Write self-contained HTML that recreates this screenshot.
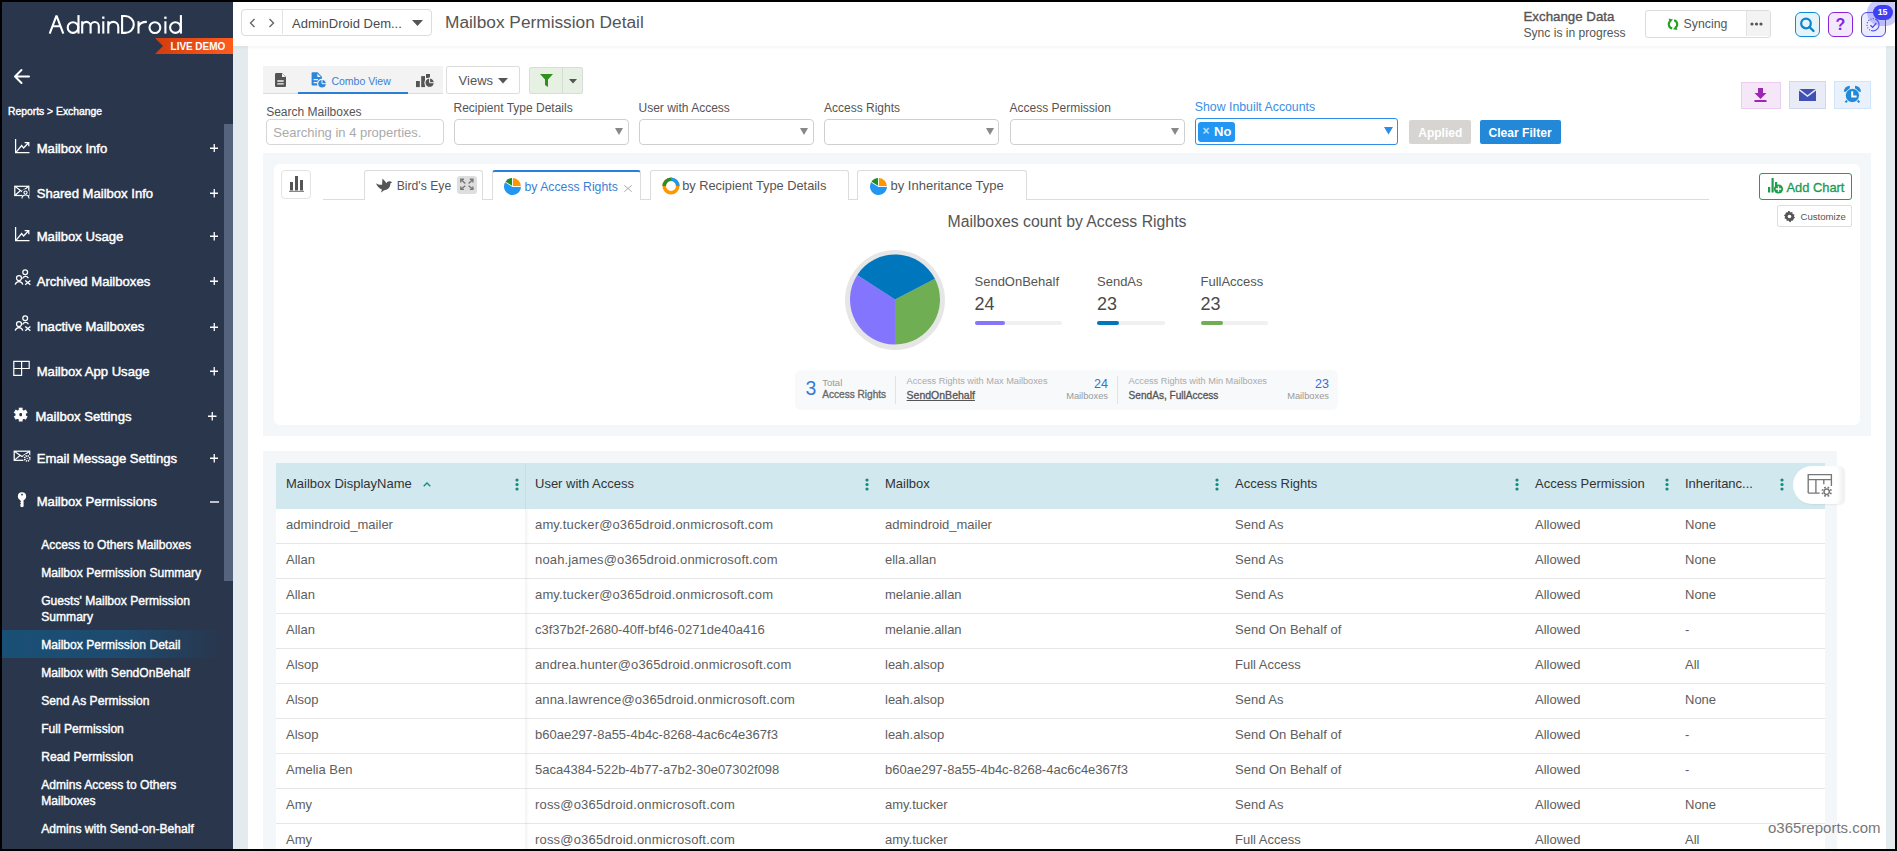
<!DOCTYPE html>
<html><head><meta charset="utf-8"><style>
html,body{margin:0;padding:0;width:1897px;height:851px;overflow:hidden;background:#000}
body{position:relative;font-family:"Liberation Sans",sans-serif}
.t{position:absolute;white-space:nowrap;font-family:"Liberation Sans",sans-serif}
svg{display:block}
</style></head><body>
<div style="position:absolute;left:233px;top:2px;width:1662px;height:847px;background:#e4ebef"></div>
<div style="position:absolute;left:248px;top:46px;width:1638px;height:803px;background:#fff"></div>
<div style="position:absolute;left:233px;top:2px;width:1662px;height:44px;background:#fff;box-shadow:0 1px 4px rgba(0,0,0,0.06)"></div>
<div style="position:absolute;left:241px;top:9px;width:191px;height:26.6px;border:1px solid #dcdcdc;border-radius:4px;box-sizing:border-box;background:#fff"></div>
<div style="position:absolute;left:282px;top:10px;width:1px;height:24px;background:#e3e3e3"></div>
<svg style="position:absolute;left:248.7px;top:18px;" width="7" height="10" viewBox="0 0 7 10"><path d="M5.5 1L1.5 5L5.5 9" stroke="#666" stroke-width="1.4" fill="none"/></svg>
<svg style="position:absolute;left:268px;top:18px;" width="7" height="10" viewBox="0 0 7 10"><path d="M1.5 1L5.5 5L1.5 9" stroke="#666" stroke-width="1.4" fill="none"/></svg>
<div class="t " style="left:292px;top:16.50px;font-size:13px;line-height:13px;color:#4a4a4a;font-weight:normal;letter-spacing:0px">AdminDroid Dem...</div>
<svg style="position:absolute;left:412px;top:20px;" width="11" height="6" viewBox="0 0 11 6"><path d="M0 0H11L5.5 6Z" fill="#555"/></svg>
<div class="t " style="left:445px;top:13.96px;font-size:17.3px;line-height:17.3px;color:#555;font-weight:normal;">Mailbox Permission Detail</div>
<div class="t " style="left:1523.5px;top:9.74px;font-size:13.3px;line-height:13.3px;color:#555;font-weight:normal;-webkit-text-stroke:0.35px #555">Exchange Data</div>
<div class="t " style="left:1523.5px;top:27.36px;font-size:12.1px;line-height:12.1px;color:#555;font-weight:normal;">Sync is in progress</div>
<div style="position:absolute;left:1645px;top:10px;width:126px;height:27.5px;border:1px solid #dcdcdc;border-radius:3px;box-sizing:border-box;background:#fff"></div>
<div style="position:absolute;left:1746px;top:11px;width:24px;height:25px;background:#f3f3f3;border-left:1px solid #e3e3e3;box-sizing:border-box"></div>
<svg style="position:absolute;left:1664px;top:17px;" width="18" height="16" viewBox="0 0 18 16"><path d="M6.90 3.66A4.2 4.2 0 0 0 8.27 11.44M10.09 3.24A4.2 4.2 0 0 1 11.10 10.94" stroke="#22a222" stroke-width="2.1" fill="none"/><path d="M4.6 1.6L9 2.4L6 5.6Z" fill="#22a222"/><path d="M13.4 13L9 12.2L12 9Z" fill="#22a222"/></svg>
<div class="t " style="left:1683.6px;top:18.09px;font-size:12.3px;line-height:12.3px;color:#555;font-weight:normal;">Syncing</div>
<svg style="position:absolute;left:1750px;top:22px;" width="13" height="4" viewBox="0 0 13 4"><circle cx="2" cy="2" r="1.6" fill="#555"/><circle cx="6.5" cy="2" r="1.6" fill="#555"/><circle cx="11" cy="2" r="1.6" fill="#555"/></svg>
<div style="position:absolute;left:1795px;top:12px;width:25px;height:25px;border:1.3px solid #0a8fd6;background:#e6f3fb;border-radius:6px;box-sizing:border-box"></div>
<svg style="position:absolute;left:1799px;top:17px;" width="17" height="16" viewBox="0 0 17 16"><circle cx="7" cy="6.5" r="4.8" stroke="#0a84cc" stroke-width="2.2" fill="none"/><path d="M10.5 10L14.5 14" stroke="#0a84cc" stroke-width="2.4" stroke-linecap="round"/></svg>
<div style="position:absolute;left:1828px;top:12px;width:25px;height:25px;border:1.3px solid #8a22dd;background:#f2e9fc;border-radius:6px;box-sizing:border-box"></div>
<div class="t" style="left:1828px;top:14.5px;width:25px;text-align:center;font-size:16px;line-height:20px;color:#8a22dd;font-weight:bold">?</div>
<div style="position:absolute;left:1861px;top:12px;width:25px;height:25px;border:1.3px solid #4747f0;background:#ebebfd;border-radius:6px;box-sizing:border-box"></div>
<svg style="position:absolute;left:1866px;top:18px;" width="15" height="15" viewBox="0 0 15 15"><path d="M9.19 1.07A6.1 6.1 0 0 1 5.01 12.53" stroke="#4747f0" stroke-width="1.1" fill="none"/><circle cx="3.60" cy="11.80" r="0.65" fill="#4747f0"/><circle cx="1.82" cy="9.85" r="0.65" fill="#4747f0"/><circle cx="1.02" cy="7.33" r="0.65" fill="#4747f0"/><circle cx="1.37" cy="4.71" r="0.65" fill="#4747f0"/><circle cx="2.79" cy="2.49" r="0.65" fill="#4747f0"/><circle cx="5.01" cy="1.07" r="0.65" fill="#4747f0"/><circle cx="7.31" cy="0.70" r="0.65" fill="#4747f0"/><path d="M4.4 7.3L6.6 9.3L10.4 5" stroke="#4747f0" stroke-width="1.2" fill="none"/></svg>
<div style="position:absolute;left:1873px;top:5px;width:20px;height:15px;border-radius:8px;background:#3f3ff2;box-shadow:0 0 0 6px rgba(90,90,240,0.32)"></div>
<div class="t " style="left:1877.8px;top:8.25px;font-size:8.8px;line-height:8.8px;color:#fff;font-weight:bold;letter-spacing:-0.2px">15</div>
<div style="position:absolute;left:2px;top:2px;width:231px;height:847px;background:#29364c"></div>
<svg style="position:absolute;left:45px;top:10px;" width="145" height="28" viewBox="0 0 145 28"><g stroke="#fff" stroke-width="2.1" fill="none"><path d="M4.7 23.6L11.5 5.6L18.3 23.6M7.5 16.2H15.5" stroke-linejoin="bevel"/><circle cx="28" cy="17.6" r="5.3"/><path d="M33.5 5.1V23.6"/><path d="M37.2 11.3V23.6M37.2 16.1A4.2 4.2 0 0 1 45.6 16.1V23.6M45.6 16.1A4.1 4.1 0 0 1 53.8 16.1V23.6"/><path d="M58.3 11.3V23.6"/><path d="M63.3 11.3V23.6M63.3 16.9A5 5 0 0 1 73.3 16.9V23.6"/><path d="M77.1 5V23.6M76.1 6H80A8.8 8.45 0 0 1 80 22.9H76.1"/><path d="M93.5 11.3V23.6M93.5 16.8C94.3 13.5 97 11.9 101.8 11.9"/><circle cx="109.9" cy="17.6" r="5.4"/><path d="M120.4 11.3V23.6"/><circle cx="130.4" cy="17.6" r="5.3"/><path d="M135.9 5.1V23.6"/></g><rect x="57.15" y="6.5" width="2.3" height="2.3" fill="#fff"/><rect x="119.25" y="6.6" width="2.3" height="2.3" fill="#fff"/></svg>
<svg style="position:absolute;left:155px;top:38px;" width="78" height="16" viewBox="0 0 78 16"><defs><linearGradient id="lg" x1="0" x2="1"><stop offset="0" stop-color="#d23c0c"/><stop offset="1" stop-color="#ff5b1f"/></linearGradient></defs><polygon points="0,0 78,0 78,16 0,16 8,8" fill="url(#lg)"/></svg>
<div class="t " style="left:170.6px;top:41.53px;font-size:10px;line-height:10px;color:#fff;font-weight:bold;letter-spacing:-0.05px">LIVE DEMO</div>
<svg style="position:absolute;left:13px;top:68px;" width="17" height="17" viewBox="0 0 17 17"><path d="M16 8.5H2M8.5 2L2 8.5L8.5 15" stroke="#fff" stroke-width="2" fill="none" stroke-linecap="round" stroke-linejoin="round"/></svg>
<div class="t " style="left:8px;top:107.04px;font-size:10.35px;line-height:10.35px;color:#fff;font-weight:normal;-webkit-text-stroke:0.4px #fff">Reports &gt; Exchange</div>
<div style="position:absolute;left:224px;top:124px;width:9px;height:457px;background:#55637d"></div>
<div class="t " style="left:36.7px;top:141.71px;font-size:13.1px;line-height:13.1px;color:#fff;font-weight:normal;-webkit-text-stroke:0.45px #fff">Mailbox Info</div>
<svg style="position:absolute;left:14px;top:138.8px;" width="17" height="16" viewBox="0 0 17 16"><path d="M1.6 0V13.7H15.5" stroke="#fff" stroke-width="1.25" fill="none"/><path d="M2.2 13.2L7.6 6.6L9.6 9L14.3 4M10.6 3.5H14.8V7.2" stroke="#fff" stroke-width="1.25" fill="none"/></svg>
<svg style="position:absolute;left:209.6px;top:143.8px;" width="8.5" height="8.5" viewBox="0 0 8.5 8.5"><path d="M4.25 0V8.5M0 4.25H8.5" stroke="#fff" stroke-width="1.3"/></svg>
<div class="t " style="left:36.7px;top:186.91px;font-size:13.1px;line-height:13.1px;color:#fff;font-weight:normal;-webkit-text-stroke:0.45px #fff">Shared Mailbox Info</div>
<svg style="position:absolute;left:14px;top:182.5px;" width="17" height="18" viewBox="0 0 17 18"><rect x="0.8" y="3.3" width="14" height="9.2" stroke="#fff" stroke-width="1.25" fill="none"/><path d="M0.8 3.3L7.8 8.5L14.8 3.3M0.8 12.5L6 8M14.8 9L10 7" stroke="#fff" stroke-width="1.1" fill="none"/><circle cx="11.5" cy="10" r="3.8" fill="#29364c"/><circle cx="11.5" cy="9.6" r="1.6" stroke="#fff" stroke-width="1.1" fill="none"/><path d="M8 15.5C8 13 9.5 12 11.5 12S15 13 15 15.5" stroke="#fff" stroke-width="1.1" fill="none"/></svg>
<svg style="position:absolute;left:209.6px;top:189px;" width="8.5" height="8.5" viewBox="0 0 8.5 8.5"><path d="M4.25 0V8.5M0 4.25H8.5" stroke="#fff" stroke-width="1.3"/></svg>
<div class="t " style="left:36.7px;top:229.91px;font-size:13.1px;line-height:13.1px;color:#fff;font-weight:normal;-webkit-text-stroke:0.45px #fff">Mailbox Usage</div>
<svg style="position:absolute;left:14px;top:227px;" width="17" height="16" viewBox="0 0 17 16"><path d="M1.6 0V13.7H15.5" stroke="#fff" stroke-width="1.25" fill="none"/><path d="M2.2 13.2L7.6 6.6L9.6 9L14.3 4M10.6 3.5H14.8V7.2" stroke="#fff" stroke-width="1.25" fill="none"/></svg>
<svg style="position:absolute;left:209.6px;top:232px;" width="8.5" height="8.5" viewBox="0 0 8.5 8.5"><path d="M4.25 0V8.5M0 4.25H8.5" stroke="#fff" stroke-width="1.3"/></svg>
<div class="t " style="left:36.7px;top:274.71px;font-size:13.1px;line-height:13.1px;color:#fff;font-weight:normal;-webkit-text-stroke:0.45px #fff">Archived Mailboxes</div>
<svg style="position:absolute;left:14px;top:269.0px;" width="18" height="18" viewBox="0 0 18 18"><circle cx="11.2" cy="3.2" r="2.4" stroke="#fff" stroke-width="1.25" fill="none"/><path d="M8.5 9.5A3.2 3.2 0 0 1 14.4 9.2" stroke="#fff" stroke-width="1.25" fill="none"/><circle cx="5" cy="9" r="2.5" stroke="#fff" stroke-width="1.25" fill="none"/><path d="M1.2 15.6A3.9 3.9 0 0 1 8.8 15.6" stroke="#fff" stroke-width="1.25" fill="none"/><path d="M11.2 11.4L16.4 15.8M16.4 11.4L11.2 15.8" stroke="#fff" stroke-width="1.3"/></svg>
<svg style="position:absolute;left:209.6px;top:276.8px;" width="8.5" height="8.5" viewBox="0 0 8.5 8.5"><path d="M4.25 0V8.5M0 4.25H8.5" stroke="#fff" stroke-width="1.3"/></svg>
<div class="t " style="left:36.7px;top:320.41px;font-size:13.1px;line-height:13.1px;color:#fff;font-weight:normal;-webkit-text-stroke:0.45px #fff">Inactive Mailboxes</div>
<svg style="position:absolute;left:14px;top:314.7px;" width="18" height="18" viewBox="0 0 18 18"><circle cx="11.2" cy="3.2" r="2.4" stroke="#fff" stroke-width="1.25" fill="none"/><path d="M8.5 9.5A3.2 3.2 0 0 1 14.4 9.2" stroke="#fff" stroke-width="1.25" fill="none"/><circle cx="5" cy="9" r="2.5" stroke="#fff" stroke-width="1.25" fill="none"/><path d="M1.2 15.6A3.9 3.9 0 0 1 8.8 15.6" stroke="#fff" stroke-width="1.25" fill="none"/><path d="M11.2 11.4L16.4 15.8M16.4 11.4L11.2 15.8" stroke="#fff" stroke-width="1.3"/></svg>
<svg style="position:absolute;left:209.6px;top:322.5px;" width="8.5" height="8.5" viewBox="0 0 8.5 8.5"><path d="M4.25 0V8.5M0 4.25H8.5" stroke="#fff" stroke-width="1.3"/></svg>
<div class="t " style="left:36.7px;top:365.21px;font-size:13.1px;line-height:13.1px;color:#fff;font-weight:normal;-webkit-text-stroke:0.45px #fff">Mailbox App Usage</div>
<svg style="position:absolute;left:13px;top:360.3px;" width="18" height="18" viewBox="0 0 18 18"><path d="M0.8 1.3H16.2V8.5H0.8ZM0.8 8.5V15.4H8.6V1.3" stroke="#fff" stroke-width="1.2" fill="none"/></svg>
<svg style="position:absolute;left:209.6px;top:367.3px;" width="8.5" height="8.5" viewBox="0 0 8.5 8.5"><path d="M4.25 0V8.5M0 4.25H8.5" stroke="#fff" stroke-width="1.3"/></svg>
<div class="t " style="left:35.4px;top:409.91px;font-size:13.1px;line-height:13.1px;color:#fff;font-weight:normal;-webkit-text-stroke:0.45px #fff">Mailbox Settings</div>
<svg style="position:absolute;left:13px;top:406.8px;" width="16" height="16" viewBox="0 0 16 16"><g transform="translate(7.7 7.6)"><circle r="5.2" fill="#fff"/><g fill="#fff"><rect x="-1.9" y="-6.9" width="3.8" height="13.8"/><rect x="-1.9" y="-6.9" width="3.8" height="13.8" transform="rotate(60)"/><rect x="-1.9" y="-6.9" width="3.8" height="13.8" transform="rotate(120)"/></g><rect x="-1.3" y="-1.7" width="2.6" height="3.4" rx="1" fill="#29364c"/></g></svg>
<svg style="position:absolute;left:208px;top:412px;" width="8.5" height="8.5" viewBox="0 0 8.5 8.5"><path d="M4.25 0V8.5M0 4.25H8.5" stroke="#fff" stroke-width="1.3"/></svg>
<div class="t " style="left:36.7px;top:452.31px;font-size:13.1px;line-height:13.1px;color:#fff;font-weight:normal;-webkit-text-stroke:0.45px #fff">Email Message Settings</div>
<svg style="position:absolute;left:13px;top:446.4px;" width="19" height="18" viewBox="0 0 19 18"><rect x="1.2" y="5.2" width="15.5" height="9.1" stroke="#fff" stroke-width="1.25" fill="none"/><path d="M1.2 5.2L9 10.5L16.7 5.2M1.2 14.3L7 9.5M16.7 14.3L11 9.5" stroke="#fff" stroke-width="1.1" fill="none"/><circle cx="14.2" cy="12.4" r="4.3" fill="#29364c"/><circle cx="14.2" cy="12.4" r="2.6" stroke="#fff" stroke-width="1.7" fill="none" stroke-dasharray="1.3 0.75"/><circle cx="14.2" cy="12.4" r="0.6" fill="#fff"/></svg>
<svg style="position:absolute;left:209.6px;top:454.4px;" width="8.5" height="8.5" viewBox="0 0 8.5 8.5"><path d="M4.25 0V8.5M0 4.25H8.5" stroke="#fff" stroke-width="1.3"/></svg>
<div class="t " style="left:36.7px;top:495.31px;font-size:13.1px;line-height:13.1px;color:#fff;font-weight:normal;-webkit-text-stroke:0.45px #fff">Mailbox Permissions</div>
<svg style="position:absolute;left:17px;top:490.9px;" width="10" height="17" viewBox="0 0 10 17"><circle cx="5" cy="5.3" r="4.1" fill="#fff"/><rect x="4.2" y="2.8" width="1.6" height="1.6" fill="#29364c"/><path d="M3.4 8H6.6V15.4L5 16.3L3.4 15.4Z" fill="#fff"/><path d="M3.2 10.5H4M3.2 12.5H4" stroke="#29364c" stroke-width="0.8"/></svg>
<svg style="position:absolute;left:209.6px;top:500.9px;" width="9" height="2" viewBox="0 0 9 2"><path d="M0 1H9" stroke="#fff" stroke-width="1.4"/></svg>
<div style="position:absolute;left:2px;top:630px;width:222px;height:28px;background:linear-gradient(90deg,#1a5076 0%,#1e4a6e 55%,#29364c 100%)"></div>
<div class="t " style="left:41.2px;top:538.76px;font-size:12.1px;line-height:12.1px;color:#fff;font-weight:normal;-webkit-text-stroke:0.4px #fff">Access to Others Mailboxes</div>
<div class="t " style="left:41.2px;top:566.76px;font-size:12.1px;line-height:12.1px;color:#fff;font-weight:normal;-webkit-text-stroke:0.4px #fff">Mailbox Permission Summary</div>
<div class="t " style="left:41.2px;top:594.76px;font-size:12.1px;line-height:12.1px;color:#fff;font-weight:normal;-webkit-text-stroke:0.4px #fff">Guests&#39; Mailbox Permission</div>
<div class="t " style="left:41.2px;top:610.76px;font-size:12.1px;line-height:12.1px;color:#fff;font-weight:normal;-webkit-text-stroke:0.4px #fff">Summary</div>
<div class="t " style="left:41.2px;top:638.76px;font-size:12.1px;line-height:12.1px;color:#fff;font-weight:normal;-webkit-text-stroke:0.4px #fff">Mailbox Permission Detail</div>
<div class="t " style="left:41.2px;top:666.76px;font-size:12.1px;line-height:12.1px;color:#fff;font-weight:normal;-webkit-text-stroke:0.4px #fff">Mailbox with SendOnBehalf</div>
<div class="t " style="left:41.2px;top:694.76px;font-size:12.1px;line-height:12.1px;color:#fff;font-weight:normal;-webkit-text-stroke:0.4px #fff">Send As Permission</div>
<div class="t " style="left:41.2px;top:722.76px;font-size:12.1px;line-height:12.1px;color:#fff;font-weight:normal;-webkit-text-stroke:0.4px #fff">Full Permission</div>
<div class="t " style="left:41.2px;top:750.76px;font-size:12.1px;line-height:12.1px;color:#fff;font-weight:normal;-webkit-text-stroke:0.4px #fff">Read Permission</div>
<div class="t " style="left:41.2px;top:778.76px;font-size:12.1px;line-height:12.1px;color:#fff;font-weight:normal;-webkit-text-stroke:0.4px #fff">Admins Access to Others</div>
<div class="t " style="left:41.2px;top:794.76px;font-size:12.1px;line-height:12.1px;color:#fff;font-weight:normal;-webkit-text-stroke:0.4px #fff">Mailboxes</div>
<div class="t " style="left:41.2px;top:822.76px;font-size:12.1px;line-height:12.1px;color:#fff;font-weight:normal;-webkit-text-stroke:0.4px #fff">Admins with Send-on-Behalf</div>
<div style="position:absolute;left:263px;top:66px;width:180px;height:28px;background:#f3f3f3;border-bottom:1px solid #dcdcdc;box-sizing:border-box"></div>
<div style="position:absolute;left:298px;top:92px;width:110px;height:2px;background:#2b7fd8"></div>
<svg style="position:absolute;left:275px;top:73px;" width="11" height="14" viewBox="0 0 11 14"><path d="M0 1.3Q0 0 1.3 0H7L11 4V12.7Q11 14 9.7 14H1.3Q0 14 0 12.7Z" fill="#555"/><path d="M7 0.3V4H10.7Z" fill="#f3f3f3"/><path d="M2.3 8H8.7M2.3 10.8H8.7" stroke="#f3f3f3" stroke-width="1.3"/></svg>
<svg style="position:absolute;left:311px;top:72px;" width="17" height="17" viewBox="0 0 17 17"><path d="M0.6 1.3Q0.6 0.3 1.6 0.3H6.6L11 4.7V12.6Q11 13.6 10 13.6H1.6Q0.6 13.6 0.6 12.6Z" fill="#2b86dc"/><path d="M6.3 1.4L9.9 5H6.3Z" fill="#f3f3f3"/><path d="M2.6 7.6H7M2.6 10.7H6.5" stroke="#f3f3f3" stroke-width="1.2"/><circle cx="11" cy="11.7" r="4.4" fill="#2b86dc" stroke="#f3f3f3" stroke-width="1.2"/><path d="M11 6.8V11.7H16" stroke="#f3f3f3" stroke-width="1" fill="none"/></svg>
<div class="t " style="left:331.4px;top:76.31px;font-size:10.5px;line-height:10.5px;color:#3a7fd5;font-weight:normal;">Combo View</div>
<svg style="position:absolute;left:416px;top:73px;" width="20" height="15" viewBox="0 0 20 15"><rect x="0" y="8" width="3.8" height="6.1" fill="#555"/><rect x="5.2" y="3.1" width="3.8" height="11" fill="#555"/><rect x="10" y="1" width="4" height="4" fill="#555"/><circle cx="13.6" cy="9.7" r="4.7" fill="#555" stroke="#f3f3f3" stroke-width="1.1"/><path d="M13.6 4.6V9.7H18.8" stroke="#f3f3f3" stroke-width="1" fill="none"/></svg>
<div style="position:absolute;left:446px;top:66px;width:74px;height:28px;background:#fff;border:1px solid #dcdcdc;border-radius:2px;box-sizing:border-box"></div>
<div class="t " style="left:458.6px;top:74.30px;font-size:13px;line-height:13px;color:#555;font-weight:normal;">Views</div>
<svg style="position:absolute;left:498px;top:77.7px;" width="10" height="6" viewBox="0 0 10 6"><path d="M0 0H10L5 5.5Z" fill="#555"/></svg>
<div style="position:absolute;left:529px;top:67px;width:54px;height:27px;background:#e6f1e4;border:1px solid #d9dcd9;border-radius:2px;box-sizing:border-box"></div>
<div style="position:absolute;left:562px;top:68px;width:1px;height:25px;background:#d6dbd5"></div>
<svg style="position:absolute;left:539.5px;top:74px;" width="13" height="13" viewBox="0 0 13 13"><path d="M0 0H13L8 5.5V13L5 11V5.5Z" fill="#2f8f1f"/></svg>
<svg style="position:absolute;left:569px;top:78.5px;" width="8" height="5" viewBox="0 0 8 5"><path d="M0 0H8L4 4.5Z" fill="#555"/></svg>
<div class="t " style="left:266.2px;top:105.74px;font-size:12px;line-height:12px;color:#555;font-weight:normal;">Search Mailboxes</div>
<div style="position:absolute;left:266px;top:119px;width:178px;height:26px;border:1px solid #d6d6d6;border-radius:4px;box-sizing:border-box;background:#fff"></div>
<div class="t " style="left:273.3px;top:125.50px;font-size:13px;line-height:13px;color:#aaa;font-weight:normal;">Searching in 4 properties.</div>
<div class="t " style="left:453.5px;top:101.84px;font-size:12px;line-height:12px;color:#555;font-weight:normal;">Recipient Type Details</div>
<div style="position:absolute;left:453.5px;top:119px;width:175px;height:26px;border:1px solid #cfcfcf;border-radius:4px;box-sizing:border-box;background:#fff"></div>
<svg style="position:absolute;left:615.0px;top:128px;" width="8" height="8" viewBox="0 0 8 8"><path d="M0 0H8L4 7Z" fill="#888"/></svg>
<div class="t " style="left:638.5px;top:101.84px;font-size:12px;line-height:12px;color:#555;font-weight:normal;">User with Access</div>
<div style="position:absolute;left:638.5px;top:119px;width:175px;height:26px;border:1px solid #cfcfcf;border-radius:4px;box-sizing:border-box;background:#fff"></div>
<svg style="position:absolute;left:800.0px;top:128px;" width="8" height="8" viewBox="0 0 8 8"><path d="M0 0H8L4 7Z" fill="#888"/></svg>
<div class="t " style="left:824px;top:101.84px;font-size:12px;line-height:12px;color:#555;font-weight:normal;">Access Rights</div>
<div style="position:absolute;left:824px;top:119px;width:175px;height:26px;border:1px solid #cfcfcf;border-radius:4px;box-sizing:border-box;background:#fff"></div>
<svg style="position:absolute;left:985.5px;top:128px;" width="8" height="8" viewBox="0 0 8 8"><path d="M0 0H8L4 7Z" fill="#888"/></svg>
<div class="t " style="left:1009.5px;top:101.84px;font-size:12px;line-height:12px;color:#555;font-weight:normal;">Access Permission</div>
<div style="position:absolute;left:1009.5px;top:119px;width:175px;height:26px;border:1px solid #cfcfcf;border-radius:4px;box-sizing:border-box;background:#fff"></div>
<svg style="position:absolute;left:1171.0px;top:128px;" width="8" height="8" viewBox="0 0 8 8"><path d="M0 0H8L4 7Z" fill="#888"/></svg>
<div class="t " style="left:1194.8px;top:100.79px;font-size:12.3px;line-height:12.3px;color:#3b8ee3;font-weight:normal;">Show Inbuilt Accounts</div>
<div style="position:absolute;left:1195px;top:118px;width:203px;height:27px;border:1.5px solid #2d8fe8;border-radius:3px;box-sizing:border-box;background:#fff"></div>
<div style="position:absolute;left:1198px;top:121.5px;width:37px;height:20.5px;background:#2196f3;border-radius:3px"></div>
<div class="t " style="left:1202.5px;top:125.34px;font-size:12px;line-height:12px;color:#bfe0fb;font-weight:bold;">&times;</div>
<div class="t " style="left:1214px;top:125.20px;font-size:13px;line-height:13px;color:#fff;font-weight:bold;">No</div>
<svg style="position:absolute;left:1384px;top:127px;" width="9" height="8" viewBox="0 0 9 8"><path d="M0 0H9L4.5 7.5Z" fill="#2b8ee6"/></svg>
<div style="position:absolute;left:1409px;top:120px;width:62px;height:24px;background:#d6d5d2;border-radius:2px"></div>
<div class="t " style="left:1418.3px;top:126.84px;font-size:12px;line-height:12px;color:#fff;font-weight:bold;">Applied</div>
<div style="position:absolute;left:1480px;top:120px;width:81px;height:24px;background:#2388d8;border-radius:2px"></div>
<div class="t " style="left:1488.5px;top:126.76px;font-size:12.1px;line-height:12.1px;color:#fff;font-weight:bold;">Clear Filter</div>
<div style="position:absolute;left:1741px;top:82px;width:40px;height:27px;background:#f5e7f8;border:1px solid #ebcdf0;box-sizing:border-box"></div>
<svg style="position:absolute;left:1754px;top:88px;" width="13" height="14" viewBox="0 0 13 14"><path d="M4 0H9V5H12.5L6.5 11L0.5 5H4Z" fill="#9c27b0"/><rect x="0.5" y="12" width="12" height="2" fill="#9c27b0"/></svg>
<div style="position:absolute;left:1789px;top:81px;width:37px;height:28px;background:#e9ebf6;border:1px solid #d3d7ee;box-sizing:border-box"></div>
<svg style="position:absolute;left:1799px;top:89px;" width="17" height="12" viewBox="0 0 17 12"><rect x="0" y="0" width="17" height="12" fill="#3f51b5"/><path d="M0 0.5L8.5 7L17 0.5" stroke="#e9ebf6" stroke-width="1.4" fill="none"/></svg>
<div style="position:absolute;left:1834px;top:81px;width:37px;height:28px;background:#e9f2fc;border:1px solid #d2e4f7;box-sizing:border-box"></div>
<svg style="position:absolute;left:1843px;top:85px;" width="19" height="19" viewBox="0 0 19 19"><path d="M6.8 6.8L0.8 6.8A6 6 0 0 1 6.8 0.8Z" fill="#2388d8"/><path d="M12 6.8L18 6.8A6 6 0 0 0 12 0.8Z" fill="#2388d8"/><path d="M4.3 15.3L2.4 17.4M14.5 15.3L16.4 17.4" stroke="#2388d8" stroke-width="2"/><circle cx="9.4" cy="10.5" r="7.1" fill="#2388d8" stroke="#e9f2fc" stroke-width="1"/><path d="M9.2 6.3V11.4H13.6" stroke="#fff" stroke-width="2" fill="none"/></svg>
<div style="position:absolute;left:263px;top:153px;width:1608px;height:283px;background:#f4f7f9"></div>
<div style="position:absolute;left:273.5px;top:164px;width:1586.5px;height:261px;background:#fff;border-radius:6px"></div>
<div style="position:absolute;left:281px;top:170px;width:30px;height:29px;border:1px solid #e3e3e3;border-radius:4px;box-sizing:border-box;background:#fff"></div>
<svg style="position:absolute;left:289px;top:176px;" width="15" height="16" viewBox="0 0 15 16"><rect x="1" y="6" width="3" height="8.5" fill="#555"/><rect x="6" y="0" width="3" height="14.5" fill="#555"/><rect x="11" y="4" width="3" height="10.5" fill="#555"/><rect x="0" y="14.8" width="15" height="1.2" fill="#888"/></svg>
<div style="position:absolute;left:323px;top:199px;width:1386px;height:1px;background:#dcdcdc"></div>
<div style="position:absolute;left:363.5px;top:170px;width:119.5px;height:30px;border:1px solid #dcdcdc;border-bottom:none;border-radius:3px 3px 0 0;box-sizing:border-box;background:#fff"></div>
<svg style="position:absolute;left:375px;top:177px;" width="18" height="17" viewBox="0 0 18 17"><path d="M1 6.3C3 7.6 5 8 7 7.8L7.5 1.4C9 3 10.5 4.5 11.3 6.2C12 4.6 13.5 3.9 15 4.3L17.2 5.3L15.4 6.4C15.5 10 13 12.8 9.2 13.2L6 15.5L6.9 12.5C4 11.5 2 9.3 1 6.3Z" fill="#555"/></svg>
<div class="t " style="left:396.7px;top:179.67px;font-size:12.2px;line-height:12.2px;color:#555;font-weight:normal;">Bird&#39;s Eye</div>
<div style="position:absolute;left:457.2px;top:176.2px;width:19.8px;height:17.6px;background:#dedede;border-radius:3px"></div>
<svg style="position:absolute;left:457px;top:176px;" width="20" height="18" viewBox="0 0 20 18"><g stroke="#777" stroke-width="1.4" fill="none"><path d="M4 3.4L8.3 7.4M11.6 7.4L15.9 3.4M4 13.2L8.3 9.8M11.6 9.8L15.9 13.2"/><path d="M3.8 6.4V3.2H7M12.8 3.2H15.9V6.4M3.8 10.4V13.4H7M12.8 13.4H15.9V10.4"/></g></svg>
<div style="position:absolute;left:491.5px;top:170px;width:149px;height:30px;border:1px solid #dcdcdc;border-top:2px solid #2b7fd8;border-bottom:none;border-radius:3px 3px 0 0;box-sizing:border-box;background:#fff"></div>
<svg style="position:absolute;left:504px;top:178px;" width="17" height="17" viewBox="0 0 17 17"><path d="M8.5 8.5L17.00 8.50A8.5 8.5 0 1 1 1.29 4.00Z" fill="#2196f3"/><path d="M8.5 8.5L8.50 0.00A8.5 8.5 0 0 1 17.00 8.50Z" fill="#ff9800"/><path d="M8.5 8.5L1.29 4.00A8.5 8.5 0 0 1 8.50 0.00Z" fill="#228b22"/><path d="M8.5 0V8.5H17M8.5 8.5L1.3 4" stroke="#fff" stroke-width="0.9" fill="none"/></svg>
<div class="t " style="left:524.5px;top:180.63px;font-size:12.25px;line-height:12.25px;color:#3a7fd5;font-weight:normal;">by Access Rights</div>
<svg style="position:absolute;left:624px;top:185px;" width="8" height="7" viewBox="0 0 8 7"><path d="M0.3 0.3L7.7 6.7M7.7 0.3L0.3 6.7" stroke="#aaa" stroke-width="1"/></svg>
<div style="position:absolute;left:649.5px;top:170px;width:199.5px;height:30px;border:1px solid #dcdcdc;border-bottom:none;border-radius:3px 3px 0 0;box-sizing:border-box;background:#fff"></div>
<svg style="position:absolute;left:661.5px;top:177px;" width="18" height="18" viewBox="0 0 18 18"><circle cx="9" cy="9" r="6.8" stroke="#ff9800" stroke-width="3.6" fill="none"/><path d="M2.2 9A6.8 6.8 0 0 1 9 2.2" stroke="#2e8b2e" stroke-width="3.6" fill="none"/><path d="M9 2.2A6.8 6.8 0 0 1 15.8 9" stroke="#2196f3" stroke-width="3.6" fill="none"/></svg>
<div class="t " style="left:682.2px;top:180.16px;font-size:12.8px;line-height:12.8px;color:#555;font-weight:normal;">by Recipient Type Details</div>
<div style="position:absolute;left:857px;top:170px;width:170px;height:30px;border:1px solid #dcdcdc;border-bottom:none;border-radius:3px 3px 0 0;box-sizing:border-box;background:#fff"></div>
<svg style="position:absolute;left:869.8px;top:177.5px;" width="17" height="17" viewBox="0 0 17 17"><path d="M8.5 8.5L17.00 8.50A8.5 8.5 0 1 1 1.29 4.00Z" fill="#2196f3"/><path d="M8.5 8.5L8.50 0.00A8.5 8.5 0 0 1 17.00 8.50Z" fill="#ff9800"/><path d="M8.5 8.5L1.29 4.00A8.5 8.5 0 0 1 8.50 0.00Z" fill="#228b22"/><path d="M8.5 0V8.5H17M8.5 8.5L1.3 4" stroke="#fff" stroke-width="0.9" fill="none"/></svg>
<div class="t " style="left:890.5px;top:179.00px;font-size:13px;line-height:13px;color:#555;font-weight:normal;">by Inheritance Type</div>
<div style="position:absolute;left:1759px;top:173px;width:93px;height:27px;border:1.5px solid #1ea34c;border-radius:3px;box-sizing:border-box;background:#fff"></div>
<svg style="position:absolute;left:1767.5px;top:178px;" width="16" height="16" viewBox="0 0 16 16"><rect x="0" y="9" width="2.2" height="5.5" fill="#1e9e4c"/><rect x="3.5" y="0" width="2.2" height="14.5" fill="#1e9e4c"/><rect x="7" y="4" width="2.2" height="5" fill="#1e9e4c"/><circle cx="10.5" cy="11" r="4.6" fill="#1e9e4c"/><path d="M10.5 8.3V13.7M7.8 11H13.2" stroke="#fff" stroke-width="1.3"/></svg>
<div class="t " style="left:1786.4px;top:181.88px;font-size:12.9px;line-height:12.9px;color:#1a9a50;font-weight:normal;-webkit-text-stroke:0.3px #1a9a50">Add Chart</div>
<div style="position:absolute;left:1776.5px;top:205px;width:75.5px;height:21.5px;border:1px solid #dedede;border-radius:2px;box-sizing:border-box;background:#fff"></div>
<svg style="position:absolute;left:1784px;top:211px;" width="11" height="11" viewBox="0 0 11 11"><path d="M5.5 0l1 1.6 1.8-.5.3 1.9 1.9.6-.6 1.8 1.3 1.3-1.6 1-.5 1.8-1.9.3-.6 1.9-1.8-.6L5.5 11l-1-1.6-1.8.5-.3-1.9L.5 7.4l.6-1.8L-.2 4.3l1.6-1 .5-1.8 1.9-.3.6-1.9 1.8.6z" fill="#555"/><circle cx="5.5" cy="5.5" r="1.8" fill="#fff"/></svg>
<div class="t " style="left:1800.5px;top:212.17px;font-size:9.6px;line-height:9.6px;color:#555;font-weight:normal;">Customize</div>
<div class="t " style="left:947.6px;top:213.53px;font-size:15.8px;line-height:15.8px;color:#555;font-weight:normal;">Mailboxes count by Access Rights</div>
<svg style="position:absolute;left:845px;top:250px;" width="100" height="100" viewBox="0 0 100 100"><circle cx="50" cy="50" r="50" fill="#e6e6e6"/><path d="M50 49.5L89.92 28.72A45 45 0 0 1 50.00 94.50Z" fill="#6fae52"/><path d="M50 49.5L50.00 94.50A45 45 0 0 1 12.26 24.99Z" fill="#8375fd"/><path d="M50 49.5L12.26 24.99A45 45 0 0 1 89.92 28.72Z" fill="#0077bd"/></svg>
<div class="t " style="left:974.5px;top:274.80px;font-size:13px;line-height:13px;color:#555;font-weight:normal;">SendOnBehalf</div>
<div class="t " style="left:974.5px;top:294.56px;font-size:18px;line-height:18px;color:#4a4a4a;font-weight:normal;">24</div>
<div style="position:absolute;left:974.5px;top:321px;width:87px;height:4px;background:#f0f0f0;border-radius:2px"></div>
<div style="position:absolute;left:974.5px;top:321px;width:30px;height:4px;background:#8375fd;border-radius:2px"></div>
<div class="t " style="left:1097px;top:274.80px;font-size:13px;line-height:13px;color:#555;font-weight:normal;">SendAs</div>
<div class="t " style="left:1097px;top:294.56px;font-size:18px;line-height:18px;color:#4a4a4a;font-weight:normal;">23</div>
<div style="position:absolute;left:1097px;top:321px;width:68px;height:4px;background:#f0f0f0;border-radius:2px"></div>
<div style="position:absolute;left:1097px;top:321px;width:22px;height:4px;background:#0077bd;border-radius:2px"></div>
<div class="t " style="left:1200.5px;top:274.80px;font-size:13px;line-height:13px;color:#555;font-weight:normal;">FullAccess</div>
<div class="t " style="left:1200.5px;top:294.56px;font-size:18px;line-height:18px;color:#4a4a4a;font-weight:normal;">23</div>
<div style="position:absolute;left:1200.5px;top:321px;width:67.5px;height:4px;background:#f0f0f0;border-radius:2px"></div>
<div style="position:absolute;left:1200.5px;top:321px;width:22.5px;height:4px;background:#6fae52;border-radius:2px"></div>
<div style="position:absolute;left:795px;top:370px;width:543px;height:40px;background:#f8f9fa;border-radius:6px"></div>
<div class="t " style="left:805.5px;top:379.49px;font-size:19.5px;line-height:19.5px;color:#3a7bd5;font-weight:normal;">3</div>
<div class="t " style="left:822.2px;top:377.86px;font-size:9.5px;line-height:9.5px;color:#999;font-weight:normal;">Total</div>
<div class="t " style="left:822.2px;top:390.45px;font-size:10.1px;line-height:10.1px;color:#666;font-weight:normal;-webkit-text-stroke:0.3px #666">Access Rights</div>
<div style="position:absolute;left:895px;top:376px;width:1px;height:28px;background:#e2e2e2"></div>
<div class="t " style="left:906.6px;top:377.21px;font-size:9.2px;line-height:9.2px;color:#aaa;font-weight:normal;">Access Rights with Max Mailboxes</div>
<div class="t " style="left:906.6px;top:390.01px;font-size:10.5px;line-height:10.5px;color:#555;font-weight:normal;-webkit-text-stroke:0.3px #555;text-decoration:underline">SendOnBehalf</div>
<div class="t" style="right:789px;top:378.42px;font-size:12.5px;line-height:12.5px;color:#2f72d6;font-weight:normal;text-align:right;">24</div>
<div class="t" style="right:789px;top:392.13px;font-size:9.3px;line-height:9.3px;color:#999;font-weight:normal;text-align:right;">Mailboxes</div>
<div style="position:absolute;left:1117px;top:376px;width:1px;height:28px;background:#e2e2e2"></div>
<div class="t " style="left:1128.6px;top:377.21px;font-size:9.2px;line-height:9.2px;color:#aaa;font-weight:normal;">Access Rights with Min Mailboxes</div>
<div class="t " style="left:1128.6px;top:391.15px;font-size:10.1px;line-height:10.1px;color:#555;font-weight:normal;-webkit-text-stroke:0.3px #555">SendAs, FullAccess</div>
<div class="t" style="right:568px;top:378.42px;font-size:12.5px;line-height:12.5px;color:#2f72d6;font-weight:normal;text-align:right;">23</div>
<div class="t" style="right:568px;top:392.13px;font-size:9.3px;line-height:9.3px;color:#999;font-weight:normal;text-align:right;">Mailboxes</div>
<div style="position:absolute;left:263px;top:451px;width:574px;height:398px;background:#f4f7f9"></div>
<div style="position:absolute;left:263px;top:451px;width:1574px;height:398px;background:#f4f7f9"></div>
<div style="position:absolute;left:276px;top:463px;width:1549px;height:386px;background:#fff"></div>
<div style="position:absolute;left:276px;top:463px;width:1549px;height:46px;background:#d1e8ef"></div>
<div class="t " style="left:286px;top:476.80px;font-size:13px;line-height:13px;color:#333;font-weight:normal;">Mailbox DisplayName</div>
<svg style="position:absolute;left:514.5px;top:477.5px;" width="4" height="13" viewBox="0 0 4 13"><circle cx="2" cy="2" r="1.6" fill="#128a80"/><circle cx="2" cy="6.5" r="1.6" fill="#128a80"/><circle cx="2" cy="11" r="1.6" fill="#128a80"/></svg>
<div class="t " style="left:535px;top:476.80px;font-size:13px;line-height:13px;color:#333;font-weight:normal;">User with Access</div>
<svg style="position:absolute;left:864.5px;top:477.5px;" width="4" height="13" viewBox="0 0 4 13"><circle cx="2" cy="2" r="1.6" fill="#128a80"/><circle cx="2" cy="6.5" r="1.6" fill="#128a80"/><circle cx="2" cy="11" r="1.6" fill="#128a80"/></svg>
<div class="t " style="left:885px;top:476.80px;font-size:13px;line-height:13px;color:#333;font-weight:normal;">Mailbox</div>
<svg style="position:absolute;left:1214.5px;top:477.5px;" width="4" height="13" viewBox="0 0 4 13"><circle cx="2" cy="2" r="1.6" fill="#128a80"/><circle cx="2" cy="6.5" r="1.6" fill="#128a80"/><circle cx="2" cy="11" r="1.6" fill="#128a80"/></svg>
<div class="t " style="left:1235px;top:476.80px;font-size:13px;line-height:13px;color:#333;font-weight:normal;">Access Rights</div>
<svg style="position:absolute;left:1514.5px;top:477.5px;" width="4" height="13" viewBox="0 0 4 13"><circle cx="2" cy="2" r="1.6" fill="#128a80"/><circle cx="2" cy="6.5" r="1.6" fill="#128a80"/><circle cx="2" cy="11" r="1.6" fill="#128a80"/></svg>
<div class="t " style="left:1535px;top:476.80px;font-size:13px;line-height:13px;color:#333;font-weight:normal;">Access Permission</div>
<svg style="position:absolute;left:1664.5px;top:477.5px;" width="4" height="13" viewBox="0 0 4 13"><circle cx="2" cy="2" r="1.6" fill="#128a80"/><circle cx="2" cy="6.5" r="1.6" fill="#128a80"/><circle cx="2" cy="11" r="1.6" fill="#128a80"/></svg>
<div class="t " style="left:1685px;top:476.80px;font-size:13px;line-height:13px;color:#333;font-weight:normal;">Inheritanc...</div>
<svg style="position:absolute;left:1779.5px;top:477.5px;" width="4" height="13" viewBox="0 0 4 13"><circle cx="2" cy="2" r="1.6" fill="#128a80"/><circle cx="2" cy="6.5" r="1.6" fill="#128a80"/><circle cx="2" cy="11" r="1.6" fill="#128a80"/></svg>
<svg style="position:absolute;left:423px;top:481.5px;" width="8" height="5" viewBox="0 0 8 5"><path d="M0.7 4.3L4 1L7.3 4.3" stroke="#128a80" stroke-width="1.3" fill="none"/></svg>
<div class="t " style="left:286px;top:517.90px;font-size:13px;line-height:13px;color:#5e5e5e;font-weight:normal;">admindroid_mailer</div>
<div class="t " style="left:535px;top:517.90px;font-size:13px;line-height:13px;color:#5e5e5e;font-weight:normal;letter-spacing:0.153px">amy.tucker@o365droid.onmicrosoft.com</div>
<div class="t " style="left:885px;top:517.90px;font-size:13px;line-height:13px;color:#5e5e5e;font-weight:normal;">admindroid_mailer</div>
<div class="t " style="left:1235px;top:517.90px;font-size:13px;line-height:13px;color:#5e5e5e;font-weight:normal;">Send As</div>
<div class="t " style="left:1535px;top:517.90px;font-size:13px;line-height:13px;color:#5e5e5e;font-weight:normal;">Allowed</div>
<div class="t " style="left:1685px;top:517.90px;font-size:13px;line-height:13px;color:#5e5e5e;font-weight:normal;">None</div>
<div style="position:absolute;left:276px;top:543px;width:1549px;height:1px;background:#e6e6e6"></div>
<div class="t " style="left:286px;top:552.90px;font-size:13px;line-height:13px;color:#5e5e5e;font-weight:normal;">Allan</div>
<div class="t " style="left:535px;top:552.90px;font-size:13px;line-height:13px;color:#5e5e5e;font-weight:normal;letter-spacing:0.153px">noah.james@o365droid.onmicrosoft.com</div>
<div class="t " style="left:885px;top:552.90px;font-size:13px;line-height:13px;color:#5e5e5e;font-weight:normal;">ella.allan</div>
<div class="t " style="left:1235px;top:552.90px;font-size:13px;line-height:13px;color:#5e5e5e;font-weight:normal;">Send As</div>
<div class="t " style="left:1535px;top:552.90px;font-size:13px;line-height:13px;color:#5e5e5e;font-weight:normal;">Allowed</div>
<div class="t " style="left:1685px;top:552.90px;font-size:13px;line-height:13px;color:#5e5e5e;font-weight:normal;">None</div>
<div style="position:absolute;left:276px;top:578px;width:1549px;height:1px;background:#e6e6e6"></div>
<div class="t " style="left:286px;top:587.90px;font-size:13px;line-height:13px;color:#5e5e5e;font-weight:normal;">Allan</div>
<div class="t " style="left:535px;top:587.90px;font-size:13px;line-height:13px;color:#5e5e5e;font-weight:normal;letter-spacing:0.153px">amy.tucker@o365droid.onmicrosoft.com</div>
<div class="t " style="left:885px;top:587.90px;font-size:13px;line-height:13px;color:#5e5e5e;font-weight:normal;">melanie.allan</div>
<div class="t " style="left:1235px;top:587.90px;font-size:13px;line-height:13px;color:#5e5e5e;font-weight:normal;">Send As</div>
<div class="t " style="left:1535px;top:587.90px;font-size:13px;line-height:13px;color:#5e5e5e;font-weight:normal;">Allowed</div>
<div class="t " style="left:1685px;top:587.90px;font-size:13px;line-height:13px;color:#5e5e5e;font-weight:normal;">None</div>
<div style="position:absolute;left:276px;top:613px;width:1549px;height:1px;background:#e6e6e6"></div>
<div class="t " style="left:286px;top:622.90px;font-size:13px;line-height:13px;color:#5e5e5e;font-weight:normal;">Allan</div>
<div class="t " style="left:535px;top:622.90px;font-size:13px;line-height:13px;color:#5e5e5e;font-weight:normal;">c3f37b2f-2680-40ff-bf46-0271de40a416</div>
<div class="t " style="left:885px;top:622.90px;font-size:13px;line-height:13px;color:#5e5e5e;font-weight:normal;">melanie.allan</div>
<div class="t " style="left:1235px;top:622.90px;font-size:13px;line-height:13px;color:#5e5e5e;font-weight:normal;">Send On Behalf of</div>
<div class="t " style="left:1535px;top:622.90px;font-size:13px;line-height:13px;color:#5e5e5e;font-weight:normal;">Allowed</div>
<div class="t " style="left:1685px;top:622.90px;font-size:13px;line-height:13px;color:#5e5e5e;font-weight:normal;">-</div>
<div style="position:absolute;left:276px;top:648px;width:1549px;height:1px;background:#e6e6e6"></div>
<div class="t " style="left:286px;top:657.90px;font-size:13px;line-height:13px;color:#5e5e5e;font-weight:normal;">Alsop</div>
<div class="t " style="left:535px;top:657.90px;font-size:13px;line-height:13px;color:#5e5e5e;font-weight:normal;letter-spacing:0.141px">andrea.hunter@o365droid.onmicrosoft.com</div>
<div class="t " style="left:885px;top:657.90px;font-size:13px;line-height:13px;color:#5e5e5e;font-weight:normal;">leah.alsop</div>
<div class="t " style="left:1235px;top:657.90px;font-size:13px;line-height:13px;color:#5e5e5e;font-weight:normal;">Full Access</div>
<div class="t " style="left:1535px;top:657.90px;font-size:13px;line-height:13px;color:#5e5e5e;font-weight:normal;">Allowed</div>
<div class="t " style="left:1685px;top:657.90px;font-size:13px;line-height:13px;color:#5e5e5e;font-weight:normal;">All</div>
<div style="position:absolute;left:276px;top:683px;width:1549px;height:1px;background:#e6e6e6"></div>
<div class="t " style="left:286px;top:692.90px;font-size:13px;line-height:13px;color:#5e5e5e;font-weight:normal;">Alsop</div>
<div class="t " style="left:535px;top:692.90px;font-size:13px;line-height:13px;color:#5e5e5e;font-weight:normal;letter-spacing:0.141px">anna.lawrence@o365droid.onmicrosoft.com</div>
<div class="t " style="left:885px;top:692.90px;font-size:13px;line-height:13px;color:#5e5e5e;font-weight:normal;">leah.alsop</div>
<div class="t " style="left:1235px;top:692.90px;font-size:13px;line-height:13px;color:#5e5e5e;font-weight:normal;">Send As</div>
<div class="t " style="left:1535px;top:692.90px;font-size:13px;line-height:13px;color:#5e5e5e;font-weight:normal;">Allowed</div>
<div class="t " style="left:1685px;top:692.90px;font-size:13px;line-height:13px;color:#5e5e5e;font-weight:normal;">None</div>
<div style="position:absolute;left:276px;top:718px;width:1549px;height:1px;background:#e6e6e6"></div>
<div class="t " style="left:286px;top:727.90px;font-size:13px;line-height:13px;color:#5e5e5e;font-weight:normal;">Alsop</div>
<div class="t " style="left:535px;top:727.90px;font-size:13px;line-height:13px;color:#5e5e5e;font-weight:normal;">b60ae297-8a55-4b4c-8268-4ac6c4e367f3</div>
<div class="t " style="left:885px;top:727.90px;font-size:13px;line-height:13px;color:#5e5e5e;font-weight:normal;">leah.alsop</div>
<div class="t " style="left:1235px;top:727.90px;font-size:13px;line-height:13px;color:#5e5e5e;font-weight:normal;">Send On Behalf of</div>
<div class="t " style="left:1535px;top:727.90px;font-size:13px;line-height:13px;color:#5e5e5e;font-weight:normal;">Allowed</div>
<div class="t " style="left:1685px;top:727.90px;font-size:13px;line-height:13px;color:#5e5e5e;font-weight:normal;">-</div>
<div style="position:absolute;left:276px;top:753px;width:1549px;height:1px;background:#e6e6e6"></div>
<div class="t " style="left:286px;top:762.90px;font-size:13px;line-height:13px;color:#5e5e5e;font-weight:normal;">Amelia Ben</div>
<div class="t " style="left:535px;top:762.90px;font-size:13px;line-height:13px;color:#5e5e5e;font-weight:normal;">5aca4384-522b-4b77-a7b2-30e07302f098</div>
<div class="t " style="left:885px;top:762.90px;font-size:13px;line-height:13px;color:#5e5e5e;font-weight:normal;">b60ae297-8a55-4b4c-8268-4ac6c4e367f3</div>
<div class="t " style="left:1235px;top:762.90px;font-size:13px;line-height:13px;color:#5e5e5e;font-weight:normal;">Send On Behalf of</div>
<div class="t " style="left:1535px;top:762.90px;font-size:13px;line-height:13px;color:#5e5e5e;font-weight:normal;">Allowed</div>
<div class="t " style="left:1685px;top:762.90px;font-size:13px;line-height:13px;color:#5e5e5e;font-weight:normal;">-</div>
<div style="position:absolute;left:276px;top:788px;width:1549px;height:1px;background:#e6e6e6"></div>
<div class="t " style="left:286px;top:797.90px;font-size:13px;line-height:13px;color:#5e5e5e;font-weight:normal;">Amy</div>
<div class="t " style="left:535px;top:797.90px;font-size:13px;line-height:13px;color:#5e5e5e;font-weight:normal;letter-spacing:0.183px">ross@o365droid.onmicrosoft.com</div>
<div class="t " style="left:885px;top:797.90px;font-size:13px;line-height:13px;color:#5e5e5e;font-weight:normal;">amy.tucker</div>
<div class="t " style="left:1235px;top:797.90px;font-size:13px;line-height:13px;color:#5e5e5e;font-weight:normal;">Send As</div>
<div class="t " style="left:1535px;top:797.90px;font-size:13px;line-height:13px;color:#5e5e5e;font-weight:normal;">Allowed</div>
<div class="t " style="left:1685px;top:797.90px;font-size:13px;line-height:13px;color:#5e5e5e;font-weight:normal;">None</div>
<div style="position:absolute;left:276px;top:823px;width:1549px;height:1px;background:#e6e6e6"></div>
<div class="t " style="left:286px;top:832.90px;font-size:13px;line-height:13px;color:#5e5e5e;font-weight:normal;">Amy</div>
<div class="t " style="left:535px;top:832.90px;font-size:13px;line-height:13px;color:#5e5e5e;font-weight:normal;letter-spacing:0.183px">ross@o365droid.onmicrosoft.com</div>
<div class="t " style="left:885px;top:832.90px;font-size:13px;line-height:13px;color:#5e5e5e;font-weight:normal;">amy.tucker</div>
<div class="t " style="left:1235px;top:832.90px;font-size:13px;line-height:13px;color:#5e5e5e;font-weight:normal;">Full Access</div>
<div class="t " style="left:1535px;top:832.90px;font-size:13px;line-height:13px;color:#5e5e5e;font-weight:normal;">Allowed</div>
<div class="t " style="left:1685px;top:832.90px;font-size:13px;line-height:13px;color:#5e5e5e;font-weight:normal;">All</div>
<div style="position:absolute;left:276px;top:858px;width:1549px;height:1px;background:#e6e6e6"></div>
<div style="position:absolute;left:525px;top:509px;width:4px;height:340px;background:linear-gradient(90deg,rgba(0,0,0,0.05),rgba(0,0,0,0))"></div>
<div style="position:absolute;left:525px;top:463px;width:1px;height:46px;background:rgba(0,0,0,0.04)"></div>
<div style="position:absolute;left:1793px;top:466px;width:51px;height:38px;background:#fff;border-radius:19px 5px 5px 19px;box-shadow:inset -6px 0 5px -3px rgba(0,0,0,0.07), 1px 1px 2px rgba(0,0,0,0.06)"></div>
<svg style="position:absolute;left:1806px;top:472px;" width="28" height="26" viewBox="0 0 28 26"><path d="M2.2 21.1V2.6H25.4V14.1M2.2 21.1H13.7M2.2 7.6H25.4M9.9 7.6V21.1M17.8 7.6V12.3" stroke="#777" stroke-width="1.35" fill="none"/><g transform="translate(20.7 19.7)"><circle r="5.6" fill="#fff"/><circle r="2.7" stroke="#777" stroke-width="1.5" fill="none"/><path d="M3.33 1.38L4.90 2.03M1.38 3.33L2.03 4.90M-1.38 3.33L-2.03 4.90M-3.33 1.38L-4.90 2.03M-3.33 -1.38L-4.90 -2.03M-1.38 -3.33L-2.03 -4.90M1.38 -3.33L2.03 -4.90M3.33 -1.38L4.90 -2.03" stroke="#777" stroke-width="1.7"/></g></svg>
<div class="t " style="left:1768px;top:820.40px;font-size:15px;line-height:15px;color:#777;font-weight:normal;">o365reports.com</div>
<div style="position:absolute;left:0px;top:0px;width:1897px;height:2px;background:#000;z-index:50"></div>
<div style="position:absolute;left:0px;top:849px;width:1897px;height:2px;background:#000;z-index:50"></div>
<div style="position:absolute;left:0px;top:0px;width:2px;height:851px;background:#000;z-index:50"></div>
<div style="position:absolute;left:1895px;top:0px;width:2px;height:851px;background:#000;z-index:50"></div>
</body></html>
